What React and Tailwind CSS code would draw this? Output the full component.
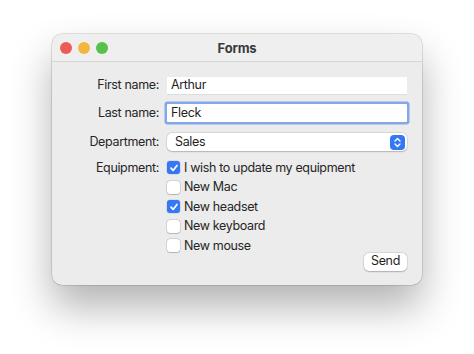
import React from "react";

const font = { fontFamily: "Inter, 'Noto Sans', sans-serif" };

function Check({ checked }) {
  return checked ? (
    <div className="w-[13px] h-[13px] rounded-[3px] bg-[#3478f6] flex items-center justify-center shadow-[0_0_0_0.5px_rgba(0,0,0,0.15)]">
      <svg width="10" height="10" viewBox="0 0 10 10" fill="none">
        <path d="M2 5.2 L4.1 7.4 L8 2.4" stroke="white" strokeWidth="1.7" strokeLinecap="round" strokeLinejoin="round" />
      </svg>
    </div>
  ) : (
    <div className="w-[13px] h-[13px] rounded-[3px] bg-white shadow-[0_0_0_0.5px_rgba(0,0,0,0.2),0_0.5px_1px_rgba(0,0,0,0.15)]" />
  );
}

function CheckRow({ checked, label }) {
  return (
    <div className="h-[19.5px] flex items-center gap-[4px]">
      <Check checked={checked} />
      <span className="text-[#262626]">{label}</span>
    </div>
  );
}

export default function App() {
  return (
    <div className="w-[474px] h-[354px] bg-white pt-[34px] pl-[52px] text-[12.5px] leading-none tracking-[-0.35px]" style={font}>
      <div className="w-[370px] rounded-[10px] bg-[#ececec] overflow-hidden shadow-[0_0_0_0.5px_rgba(0,0,0,0.22),0_22px_40px_rgba(0,0,0,0.3)]">
        <div className="relative h-[28px] border-b border-[#d6d6d6] bg-[#efefef] flex items-center pl-[8px] gap-[6px]">
          <div className="w-[12px] h-[12px] rounded-full bg-[#ec5b55] mt-[1px]" />
          <div className="w-[12px] h-[12px] rounded-full bg-[#f3b63f] mt-[1px]" />
          <div className="w-[12px] h-[12px] rounded-full bg-[#5ac04c] mt-[1px]" />
          <div className="absolute inset-0 flex items-center justify-center font-bold text-[13px] text-[#3a3a3a] pt-[1px] tracking-[-0.2px]">
            Forms
          </div>
        </div>
        <div className="pt-[15px] pb-[14px] pr-[15px] flex flex-col">
          <div className="grid grid-cols-[107px_240px] gap-x-[8px] items-center">
            <div className="text-right text-[#262626]">First name:</div>
            <div className="h-[17px] bg-white flex items-center pl-[4px] text-[#1f1f1f] shadow-[0_0.5px_0_rgba(0,0,0,0.12)]">Arthur</div>
          </div>
          <div className="grid grid-cols-[107px_240px] gap-x-[8px] items-center mt-[10px]">
            <div className="text-right text-[#262626]">Last name:</div>
            <div className="h-[18px] bg-white flex items-center pl-[4px] text-[#1f1f1f] rounded-[1px] shadow-[0_0_0_2.5px_#84a7ea]">Fleck</div>
          </div>
          <div className="grid grid-cols-[107px_240px] gap-x-[8px] items-center mt-[11px]">
            <div className="text-right text-[#262626]">Department:</div>
            <div className="h-[18px] bg-white rounded-[5px] flex items-center justify-between pl-[8px] pr-[2px] text-[#1f1f1f] shadow-[0_0_0_0.5px_rgba(0,0,0,0.1),0_0.5px_1.5px_rgba(0,0,0,0.2)]">
              <span>Sales</span>
              <div className="w-[15px] h-[15px] rounded-[4px] bg-[#3478f6] flex items-center justify-center">
                <svg width="9" height="11" viewBox="0 0 9 11" fill="none">
                  <path d="M2 4 L4.5 1.6 L7 4" stroke="white" strokeWidth="1.4" strokeLinecap="round" strokeLinejoin="round" />
                  <path d="M2 7 L4.5 9.4 L7 7" stroke="white" strokeWidth="1.4" strokeLinecap="round" strokeLinejoin="round" />
                </svg>
              </div>
            </div>
          </div>
          <div className="grid grid-cols-[107px_240px] gap-x-[8px] mt-[7px]">
            <div className="text-right text-[#262626] h-[19.5px] flex items-center justify-end">Equipment:</div>
            <div className="flex flex-col">
              <CheckRow checked label="I wish to update my equipment" />
              <CheckRow label="New Mac" />
              <CheckRow checked label="New headset" />
              <CheckRow label="New keyboard" />
              <CheckRow label="New mouse" />
            </div>
          </div>
          <div className="flex justify-end mt-[-3px]">
            <button className="w-[43px] h-[18px] bg-white rounded-[5px] text-[#1f1f1f] flex items-center justify-center shadow-[0_0_0_0.5px_rgba(0,0,0,0.1),0_0.5px_1.5px_rgba(0,0,0,0.22)]">
              Send
            </button>
          </div>
        </div>
      </div>
    </div>
  );
}
